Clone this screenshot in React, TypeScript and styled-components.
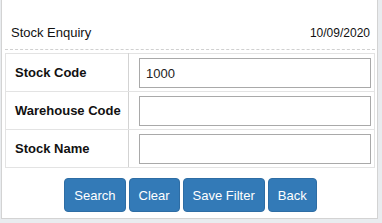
import React from "react";
import styled, { createGlobalStyle } from "styled-components";

const Global = createGlobalStyle`
  html, body { margin: 0; padding: 0; background: #e9ecef; }
  body { font-family: "Liberation Sans", Arial, sans-serif; }
`;

const Page = styled.div`
  padding: 0 4px 4px 1px;
  width: 382px;
  height: 223px;
  box-sizing: border-box;
`;

const Panel = styled.div`
  background: #fff;
  border: 1px solid #d3d3d3;
  border-top: none;
  height: 219px;
  box-sizing: border-box;
  padding: 0 2px 0 3px;
`;

const Header = styled.div`
  display: flex;
  justify-content: space-between;
  align-items: center;
  height: 50px;
  box-sizing: border-box;
  padding: 25px 5px 8px 6px;
  border-bottom: 1px dashed #d0d0d0;
  color: #111;
`;

const Title = styled.span`
  font-size: 13px;
  line-height: 16px;
`;

const DateText = styled.span`
  font-size: 12px;
  line-height: 16px;
`;

const Form = styled.table`
  margin-top: 3px;
  width: 100%;
  border-collapse: collapse;
`;

const Row = styled.tr``;

const Label = styled.td`
  width: 113px;
  height: 37px;
  padding: 0 0 0 9px;
  border: 1px solid #e3e3e3;
  border-right-color: #d3d3d3;
  font-size: 13px;
  font-weight: bold;
  color: #111;
  vertical-align: middle;
`;

const Field = styled.td`
  padding: 0 3px 0 10px;
  border: 1px solid #e3e3e3;
  border-left-color: #d3d3d3;
  vertical-align: middle;
`;

const Input = styled.input`
  display: block;
  box-sizing: border-box;
  width: 100%;
  height: 30px;
  margin-top: 1px;
  border: 1px solid #a9a9a9;
  padding: 0 6px;
  font-family: "Liberation Sans", Arial, sans-serif;
  font-size: 13px;
  color: #222;
  outline: none;
`;

const Actions = styled.div`
  display: flex;
  justify-content: center;
  gap: 3px;
  margin-top: 10px;
  padding-left: 1px;
`;

const Button = styled.button`
  height: 34px;
  padding: 0 9px;
  border: 1px solid #2e6da4;
  border-radius: 4px;
  background: #337ab7;
  color: #fff;
  font-family: "Liberation Sans", Arial, sans-serif;
  font-size: 13px;
  cursor: pointer;
`;

const fields = [
  { label: "Stock Code", value: "1000" },
  { label: "Warehouse Code", value: "" },
  { label: "Stock Name", value: "" },
];

export default function App() {
  return (
    <>
      <Global />
      <Page>
        <Panel>
          <Header>
            <Title>Stock Enquiry</Title>
            <DateText>10/09/2020</DateText>
          </Header>
          <Form>
            <tbody>
              {fields.map((f) => (
                <Row key={f.label}>
                  <Label>{f.label}</Label>
                  <Field>
                    <Input defaultValue={f.value} />
                  </Field>
                </Row>
              ))}
            </tbody>
          </Form>
          <Actions>
            <Button>Search</Button>
            <Button>Clear</Button>
            <Button>Save Filter</Button>
            <Button>Back</Button>
          </Actions>
        </Panel>
      </Page>
    </>
  );
}
